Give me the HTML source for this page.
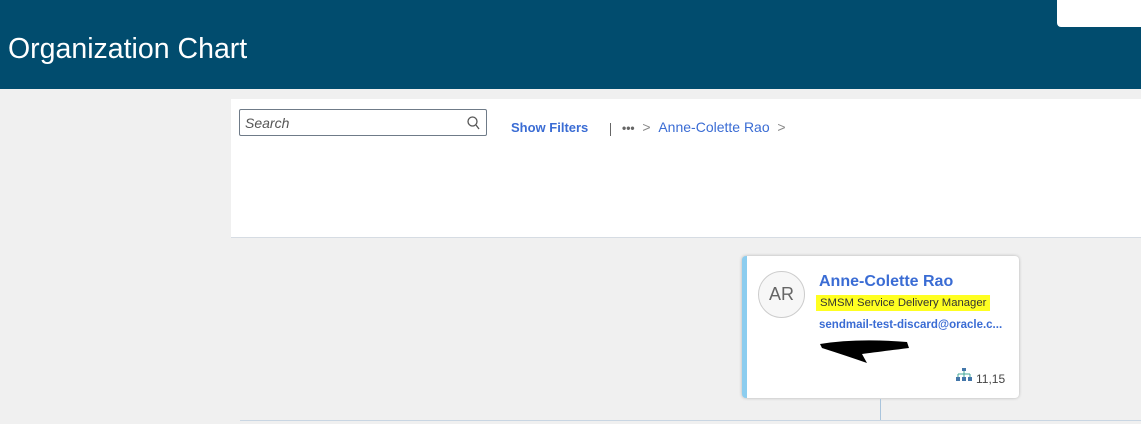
<!DOCTYPE html><html><head><style>
body{margin:0;width:1141px;height:424px;overflow:hidden;background:#f0f0f0;font-family:"Liberation Sans",sans-serif;position:relative}
.hdr{position:absolute;left:0;top:0;width:1141px;height:89px;background:#014c6e}
.hdr h1{position:absolute;left:8px;top:33px;margin:0;font-weight:normal;color:#fff;font-size:28.5px}
.wb{position:absolute;left:1057px;top:0;width:84px;height:27px;background:#fff;border-bottom-left-radius:4px}
.panel{position:absolute;left:231px;top:99px;width:910px;height:138px;background:#fff;border-bottom:1px solid #d6dce3}
.search{position:absolute;left:8px;top:10px;width:248px;height:27px;border:1px solid #6f7b88;box-sizing:border-box;border-radius:2px}
.search span{position:absolute;left:5px;top:5px;font-style:italic;color:#555;font-size:14px}
a{color:#3a6cd4;text-decoration:none}
.card{position:absolute;left:742px;top:256px;width:277px;height:142px;background:#fff;border-radius:4px;box-shadow:0 0 3px rgba(0,0,0,.25);border-left:5px solid #8ccdef;box-sizing:border-box}
</style></head><body>
<div class="hdr"><h1>Organization Chart</h1></div><div class="wb"></div>
<div class="panel">
<div class="search"><span>Search</span>
<svg style="position:absolute;left:226px;top:5px" width="16" height="16"><circle cx="6.5" cy="6.5" r="4.5" fill="none" stroke="#555" stroke-width="1.3"/><line x1="10" y1="10" x2="13" y2="14" stroke="#555" stroke-width="1.3"/></svg></div>
<a style="position:absolute;left:280px;top:21px;font-size:13px;font-weight:bold">Show Filters</a>
<div style="position:absolute;left:379px;top:24px;width:1px;height:13px;background:#666"></div>
<div style="position:absolute;left:391px;top:20px;font-size:14px;color:#888;white-space:nowrap"><b style="color:#666;letter-spacing:0px;font-size:12px">•••</b>&nbsp; &gt; &nbsp;<a>Anne-Colette Rao</a> &nbsp;&gt;</div>
</div>
<div class="card">
<div style="position:absolute;left:11px;top:15px;width:45px;height:45px;border-radius:50%;border:1px solid #ccc;background:#f7f7f7;text-align:center;line-height:45px;color:#666;font-size:18px">AR</div>
<div style="position:absolute;left:72px;top:17px;font-size:16px;font-weight:bold;color:#3a6cd4">Anne-Colette Rao</div>
<div style="position:absolute;left:69px;top:39px;background:#ffff21;padding:2px 4px;font-size:11.3px;color:#333">SMSM Service Delivery Manager</div>
<div style="position:absolute;left:72px;top:63px;font-size:11.5px;font-weight:bold;color:#3a6cd4">sendmail-test-discard@oracle.c...</div>
<svg style="position:absolute;left:70px;top:80px" width="100" height="30"><path d="M3 8 Q40 2 90 6 L92 12 Q60 16 45 18 L50 27 Q30 20 5 12Z" fill="#000"/></svg>
<svg style="position:absolute;left:209px;top:112px" width="16" height="14"><rect x="6" y="0" width="4" height="3" fill="#47a"/><path d="M8 3V6M2 6H14M2 6V9M8 6V9M14 6V9" stroke="#4a9" fill="none"/><rect x="0" y="9" width="4" height="4" fill="#47a"/><rect x="6" y="9" width="4" height="4" fill="#47a"/><rect x="12" y="9" width="4" height="4" fill="#47a"/></svg>
<div style="position:absolute;left:229px;top:116px;font-size:12px;color:#444">11,15</div>
</div>
<div style="position:absolute;left:880px;top:399px;width:1px;height:21px;background:#a9c4dc"></div>
<div style="position:absolute;left:240px;top:420px;width:901px;height:1px;background:#c9d6e3"></div>
</body></html>
